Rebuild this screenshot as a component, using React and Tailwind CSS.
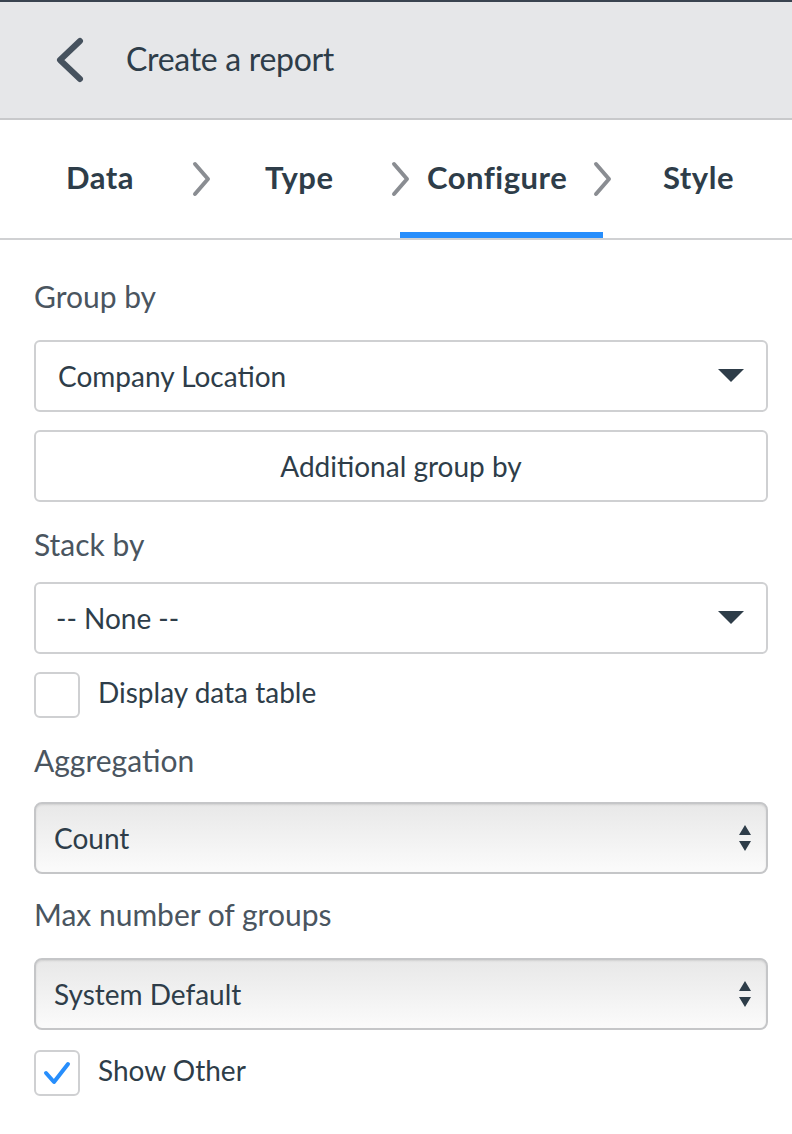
import React from "react";

const Chev = ({ cls = "" }) => (
  <svg width="22" height="36" viewBox="0 0 22 36" className={cls}>
    <path d="M4 3 L17 18 L4 33" fill="none" stroke="#8a8d92" strokeWidth="4" strokeLinecap="round" strokeLinejoin="round" />
  </svg>
);

const Caret = () => (
  <svg width="26" height="14" viewBox="0 0 26 14"><path d="M0 0 H26 L13 13 Z" fill="#2e3d49" /></svg>
);
const UpDown = () => (
  <svg width="14" height="26" viewBox="0 0 14 26"><path d="M7 0 L13 10 H1 Z M7 26 L13 16 H1 Z" fill="#2e3d49" /></svg>
);

export default function App() {
  const f = { fontFamily: "Lato, 'Open Sans', sans-serif" };
  return (
    <div style={f} className="w-[792px] h-[1134px] bg-white text-[#2e3d49]">
      <div className="h-[120px] bg-[#e6e7e9] border-t-2 border-[#3a4450] border-b-2 border-b-[#c8c9cb] flex items-center pl-[52px]">
        <svg width="34" height="46" viewBox="0 0 34 46"><path d="M28 4 L8 23 L28 42" fill="none" stroke="#46525e" strokeWidth="6" strokeLinecap="round" strokeLinejoin="round" /></svg>
        <span className="ml-[40px] text-[32px] tracking-[-0.3px] -mt-[2px]">Create a report</span>
      </div>
      <div className="h-[120px] border-b-2 border-[#d0d1d3] flex items-center relative text-[31px] font-bold tracking-[0.5px]">
        <span className="absolute left-[66px] -mt-[4px]">Data</span>
        <Chev cls="absolute left-[191px]" />
        <span className="absolute left-[265px] -mt-[4px]">Type</span>
        <Chev cls="absolute left-[390px]" />
        <span className="absolute left-[427px] -mt-[4px]">Configure</span>
        <Chev cls="absolute left-[592px]" />
        <span className="absolute left-[663px] -mt-[4px]">Style</span>
        <div className="absolute left-[400px] w-[203px] bottom-0 h-[6px] bg-[#278efc]" />
      </div>
      <div className="pl-[34px] pr-[24px] text-[30px]">
        <div className="pt-[34px] h-[100px] text-[#4a555f]">Group by</div>
        <div className="h-[72px] border-2 border-[#cfd0d2] rounded-[6px] flex items-center justify-between pl-[22px] pr-[22px] text-[28px]">
          <span>Company Location</span><Caret />
        </div>
        <div className="mt-[18px] h-[72px] border-2 border-[#cfd0d2] rounded-[6px] flex items-center justify-center text-[28px]">
          Additional group by
        </div>
        <div className="mt-[20px] h-[60px] text-[#4a555f]">Stack by</div>
        <div className="h-[72px] border-2 border-[#cfd0d2] rounded-[6px] flex items-center justify-between pl-[20px] pr-[22px] text-[28px]">
          <span>-- None --</span><Caret />
        </div>
        <div className="mt-[18px] flex items-center">
          <div className="w-[46px] h-[46px] border-2 border-[#cfd0d2] rounded-[6px]" />
          <span className="ml-[18px] text-[28px] -mt-[6px]">Display data table</span>
        </div>
        <div className="mt-[20px] h-[64px] text-[#4a555f]">Aggregation</div>
        <div className="h-[72px] border-2 border-[#c5c6c8] rounded-[8px] flex items-center justify-between pl-[18px] pr-[14px] text-[28px] bg-gradient-to-b from-[#e8e8e8] to-[#fbfbfb] shadow-[inset_0_1px_2px_rgba(0,0,0,0.1)]">
          <span>Count</span><UpDown />
        </div>
        <div className="mt-[18px] h-[66px] text-[#4a555f]">Max number of groups</div>
        <div className="h-[72px] border-2 border-[#c5c6c8] rounded-[8px] flex items-center justify-between pl-[18px] pr-[14px] text-[28px] bg-gradient-to-b from-[#e8e8e8] to-[#fbfbfb] shadow-[inset_0_1px_2px_rgba(0,0,0,0.1)]">
          <span>System Default</span><UpDown />
        </div>
        <div className="mt-[20px] flex items-center">
          <div className="w-[46px] h-[46px] border-2 border-[#cfd0d2] rounded-[6px] flex items-center justify-center">
            <svg width="28" height="24" viewBox="0 0 28 24"><path d="M3 12 L11 21 L25 3" fill="none" stroke="#278efc" strokeWidth="4" strokeLinecap="round" strokeLinejoin="round" /></svg>
          </div>
          <span className="ml-[18px] text-[28px] -mt-[6px]">Show Other</span>
        </div>
      </div>
    </div>
  );
}
